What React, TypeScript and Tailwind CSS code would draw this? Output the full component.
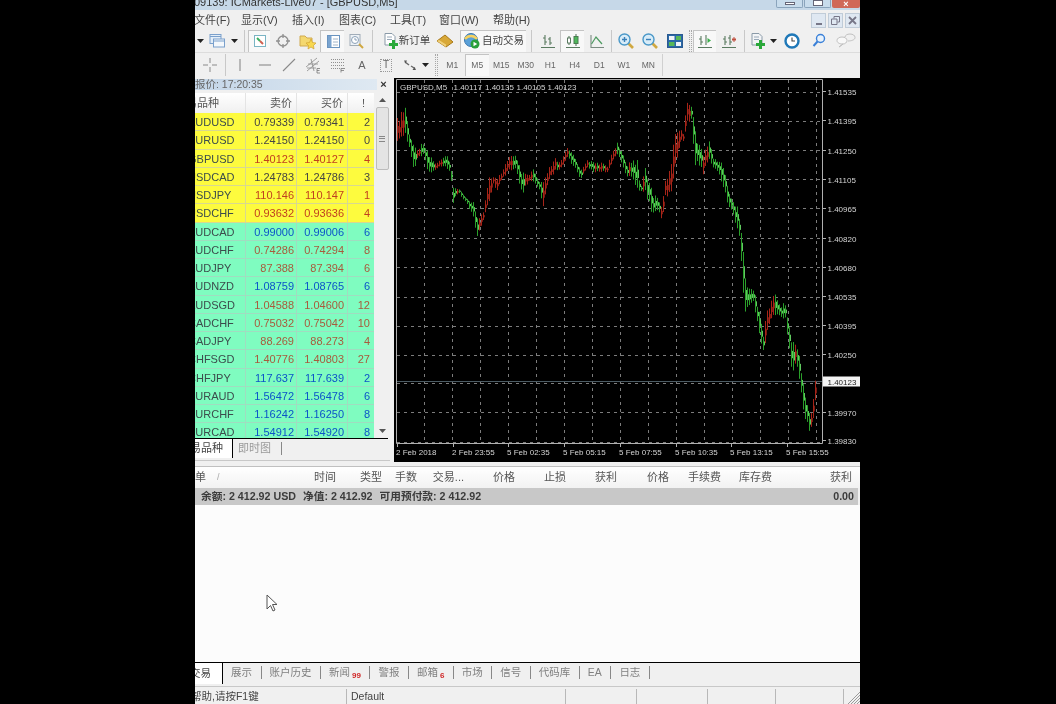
import type { ReactNode } from "react";

const rows = [
  ["AUDUSD", "0.79339", "0.79341", "2", "k", "y"],
  ["EURUSD", "1.24150", "1.24150", "0", "k", "y"],
  ["GBPUSD", "1.40123", "1.40127", "4", "r", "y"],
  ["USDCAD", "1.24783", "1.24786", "3", "k", "y"],
  ["USDJPY", "110.146", "110.147", "1", "r", "y"],
  ["USDCHF", "0.93632", "0.93636", "4", "r", "y"],
  ["AUDCAD", "0.99000", "0.99006", "6", "b", "t"],
  ["AUDCHF", "0.74286", "0.74294", "8", "m", "t"],
  ["AUDJPY", "87.388", "87.394", "6", "m", "t"],
  ["AUDNZD", "1.08759", "1.08765", "6", "b", "t"],
  ["AUDSGD", "1.04588", "1.04600", "12", "m", "t"],
  ["CADCHF", "0.75032", "0.75042", "10", "m", "t"],
  ["CADJPY", "88.269", "88.273", "4", "m", "t"],
  ["CHFSGD", "1.40776", "1.40803", "27", "m", "t"],
  ["CHFJPY", "117.637", "117.639", "2", "b", "t"],
  ["EURAUD", "1.56472", "1.56478", "6", "b", "t"],
  ["EURCHF", "1.16242", "1.16250", "8", "b", "t"],
  ["EURCAD", "1.54912", "1.54920", "8", "b", "t"],
];

// x, top, bottom of the price band, read off the picture
const band = [
  [397, 118, 145], [405, 105, 135], [410, 138, 155], [413, 142, 175], [418, 148, 158], [423, 140, 158],
  [428, 150, 175], [435, 163, 170], [442, 157, 167], [447, 155, 170], [450, 163, 173], [453, 187, 203],
  [458, 187, 193], [465, 197, 202], [473, 200, 218], [477, 215, 238], [483, 212, 220], [488, 175, 208],
  [493, 177, 185], [497, 178, 192], [503, 168, 178], [508, 155, 172], [515, 155, 172], [522, 172, 195],
  [528, 175, 183], [533, 168, 182], [538, 180, 188], [543, 182, 208], [548, 168, 182], [555, 158, 172],
  [560, 162, 170], [567, 147, 158], [575, 155, 172], [580, 170, 180], [587, 158, 170], [593, 162, 173],
  [600, 162, 173], [607, 165, 173], [612, 150, 163], [617, 142, 155], [622, 153, 168], [627, 165, 178],
  [630, 158, 178], [637, 158, 188], [640, 188, 192], [645, 168, 192], [648, 178, 205], [653, 192, 218],
  [658, 197, 212], [662, 205, 227], [665, 178, 198], [670, 168, 197], [673, 135, 182], [680, 125, 143],
  [683, 132, 142], [687, 98, 125], [692, 103, 122], [694, 120, 175], [698, 143, 163], [703, 152, 177],
  [709, 135, 162], [713, 158, 170], [718, 158, 175], [723, 165, 188], [728, 188, 208], [733, 200, 217],
  [738, 208, 233], [741, 225, 262], [743, 240, 300], [745, 272, 323], [748, 288, 308],
  [753, 287, 302], [757, 300, 328], [760, 313, 340], [763, 332, 355], [767, 310, 333], [772, 293, 317],
  [776, 294, 317], [780, 307, 317], [785, 300, 322], [788, 320, 348], [792, 340, 380], [795, 342, 365],
  [798, 347, 377], [802, 377, 405], [805, 390, 425], [810, 417, 433], [813, 390, 427], [815, 378, 403],
];

const noise = (i: number) => {
  const s = Math.sin(i * 12.9898) * 43758.5453;
  return s - Math.floor(s);
};

const bandAt = (x: number) => {
  let k = 0;
  while (k < band.length - 2 && band[k + 1][0] < x) k++;
  const a = band[k];
  const b = band[k + 1];
  const t = Math.min(1, Math.max(0, (x - a[0]) / (b[0] - a[0])));
  return [a[1] + (b[1] - a[1]) * t, a[2] + (b[2] - a[2]) * t];
};

const bars: { x: number; top: number; bot: number; up: boolean }[] = [];
for (let x = 397, i = 0; x <= 815; x += 2, i++) {
  const [t, b] = bandAt(x);
  const h = b - t;
  const before = bandAt(x - 3);
  const after = bandAt(x + 3);
  const slope = after[0] + after[1] - before[0] - before[1];
  bars.push({
    x,
    top: t + h * noise(i) * 0.25,
    bot: b - h * noise(i + 500) * 0.25,
    up: slope + (noise(i + 900) - 0.5) * 14 < 0,
  });
}

const priceLabels = [
  ["1.41535", 91], ["1.41395", 120], ["1.41250", 150], ["1.41105", 179], ["1.40965", 208], ["1.40820", 238],
  ["1.40680", 267], ["1.40535", 296], ["1.40395", 325], ["1.40250", 354], ["1.39970", 412], ["1.39830", 440],
] as const;

const timeLabels = [
  ["2 Feb 2018", 396], ["2 Feb 23:55", 452], ["5 Feb 02:35", 507], ["5 Feb 05:15", 563],
  ["5 Feb 07:55", 619], ["5 Feb 10:35", 675], ["5 Feb 13:15", 730], ["5 Feb 15:55", 786],
] as const;

const gridX = [424, 452, 480, 508, 536, 564, 592, 620, 648, 676, 704, 732, 760, 788, 816];
const gridY = [92, 121, 150, 179, 208, 238, 267, 297, 326, 355, 383, 412, 442];

const Chart = () => (
  <svg viewBox="394 78 466 384" className="block w-[466px] h-[384px] bg-black">
    {gridX.map((x) => (
      <line key={x} x1={x + 0.5} x2={x + 0.5} y1={80} y2={443} stroke="#7c7c7c" strokeWidth={1} strokeDasharray="3 4" />
    ))}
    {gridY.map((y) => (
      <line key={y} x1={397} x2={822} y1={y + 0.5} y2={y + 0.5} stroke="#7c7c7c" strokeWidth={1} strokeDasharray="3 4" />
    ))}
    <line x1={397} x2={822} y1={381.5} y2={381.5} stroke="#4c5c64" />
    <path d="M396.5 79.500H822.500V443.500H396.500Z" fill="none" stroke="#b0b0b0" />
    {timeLabels.map(([, x]) => (
      <line key={x} x1={x + 1.5} x2={x + 1.5} y1={443} y2={447} stroke="#b0b0b0" />
    ))}
    {priceLabels.map(([, y]) => (
      <line key={y} x1={823} x2={826} y1={y + 0.5} y2={y + 0.5} stroke="#b0b0b0" />
    ))}
    {bars.map((b) => (
      <g key={b.x}>
        <line x1={b.x + 0.5} x2={b.x + 0.5} y1={b.top} y2={b.bot} stroke={b.up ? "#a82418" : "#2aa02a"} />
        <line
          x1={b.x + 1.5}
          x2={b.x + 1.5}
          y1={b.top + (b.bot - b.top) * 0.35}
          y2={b.bot - (b.bot - b.top) * 0.35}
          stroke={b.up ? "#7a1a12" : "#60c860"}
        />
      </g>
    ))}
    <g fontSize={8} fill="#d4d4d4">
      <text x={400} y={90}>GBPUSD,M5</text>
      <text x={453.5} y={90}>1.40117</text>
      <text x={485} y={90}>1.40135</text>
      <text x={516.5} y={90}>1.40105</text>
      <text x={547.5} y={90}>1.40123</text>
      {priceLabels.map(([t, y]) => (
        <text key={t} x={827.5} y={y + 3.5}>{t}</text>
      ))}
      {timeLabels.map(([t, x]) => (
        <text key={t} x={x} y={455}>{t}</text>
      ))}
    </g>
    <rect x={823} y={376.5} width={37} height={10} fill="#f4f4f4" />
    <text x={827.5} y={385} fontSize={8} fill="#222">1.40123</text>
  </svg>
);

const Cell = ({ w, on, children }: { w: string; on?: boolean; children?: ReactNode }) => (
  <div
    className={`${w} h-[22px] shrink-0 flex items-center justify-center ${
      on ? "bg-[#f8f8f8] border-t border-l border-[#c4c4c4]" : ""
    }`}
  >
    {children}
  </div>
);

const Sep = ({ w }: { w: string }) => (
  <div className={`${w} h-[22px] shrink-0 flex justify-center`}>
    <div className="w-px h-full bg-[#c8c8c8]" />
  </div>
);

const Grip = ({ w }: { w: string }) => (
  <div className={`${w} h-[22px] shrink-0 flex justify-center`}>
    <div className="w-[3px] h-full border-x border-dotted border-[#a8a8a8]" />
  </div>
);

const Caret = () => (
  <svg width="7" height="4" viewBox="0 0 7 4">
    <path d="M0 0H7L3.500 4Z" fill="#222" />
  </svg>
);

const I = ({ children }: { children: ReactNode }) => (
  <svg width="18" height="18" viewBox="0 0 18 18" fill="none">
    {children}
  </svg>
);

const BarsIcon = () => (
  <I>
    <path d="M2 15.500H16M6 3V13M6 6H4M6 10H8M11 5V13M11 7H9M11 11H13" stroke="#5a7a60" strokeWidth="1.100" />
  </I>
);
const CandleIcon = () => (
  <I>
    <path d="M2 15.500H16M5 4V13M12 2V14" stroke="#5a7a60" strokeWidth="1.100" />
    <rect x="3.500" y="6" width="3" height="5" fill="#fff" stroke="#5a7a60" />
    <rect x="10" y="4.500" width="4" height="7" fill="#4db85a" stroke="#4a7a50" />
  </I>
);
const LineIcon = () => (
  <I>
    <path d="M3 3V15.500H16" stroke="#7a8a80" strokeWidth="1.100" />
    <path d="M3.500 12L8 5L14 12" stroke="#4d9a60" strokeWidth="1.200" />
  </I>
);
const MagIcon = ({ plus }: { plus?: boolean }) => (
  <I>
    <path d="M11 11L16 16" stroke="#d0a840" strokeWidth="2.600" />
    <circle cx="7.500" cy="7.500" r="5.500" fill="#d8ecf8" stroke="#4a98c8" strokeWidth="1.400" />
    <path d={plus ? "M5 7.500H10M7.500 5V10" : "M5 7.500H10"} stroke="#3a80b8" strokeWidth="1.400" />
  </I>
);

const Toolbar1 = () => (
  <div className="h-[24px] flex items-center border-b border-[#dcdcdc]">
    <Cell w="w-[11px]"><Caret /></Cell>
    <Cell w="w-[22px]">
      <I>
        <rect x="2" y="2.500" width="11" height="9" fill="#e4eef8" stroke="#7aa0cc" />
        <rect x="5.500" y="7" width="11" height="8" fill="#f4f8fc" stroke="#7aa0cc" />
        <path d="M5.500 9H16.500M2 4.500H13" stroke="#7aa0cc" />
      </I>
    </Cell>
    <Cell w="w-[12px]"><Caret /></Cell>
    <Sep w="w-[8px]" />
    <Cell w="w-[22px]" on>
      <I>
        <rect x="3.500" y="3.500" width="11" height="11" fill="#fff" stroke="#7ab4c4" />
        <path d="M6 6L9 9" stroke="#3ab060" strokeWidth="2" />
        <path d="M9 9L12 12" stroke="#d06050" strokeWidth="2" />
      </I>
    </Cell>
    <Cell w="w-[25px]">
      <I>
        <circle cx="9" cy="9" r="5" stroke="#909090" strokeWidth="1.300" />
        <path d="M9 2V6M9 12V16M2 9H6M12 9H16" stroke="#909090" strokeWidth="1.300" />
      </I>
    </Cell>
    <Cell w="w-[25px]">
      <I>
        <path d="M1 4H6L8 6H13V14H1Z" fill="#f4d870" stroke="#d0aa50" />
        <path d="M12 7L13.500 10.500L17 11L14.500 13.500L15 17L12 15L9 17L9.500 13.500L7 11L10.500 10.500Z" fill="#f8d850" stroke="#d0a030" strokeWidth="0.700" />
      </I>
    </Cell>
    <Cell w="w-[24px]" on>
      <I>
        <rect x="3.500" y="3.500" width="12" height="12" fill="#fff" stroke="#6a94c0" />
        <rect x="4" y="4" width="3.500" height="11" fill="#7aa4d0" />
        <path d="M9 7H14M9 10H14M9 13H14" stroke="#a0b4c8" />
      </I>
    </Cell>
    <Cell w="w-[24px]">
      <I>
        <rect x="3" y="2.500" width="10" height="11" fill="#eef2f6" stroke="#a0acb8" />
        <circle cx="8" cy="8" r="3.500" fill="#fff" stroke="#8aa0b8" />
        <path d="M8 6V8H10" stroke="#8aa0b8" />
        <path d="M12 12L16 16" stroke="#d0a840" strokeWidth="2" />
      </I>
    </Cell>
    <Sep w="w-[8px]" />
    <Cell w="w-[60px]">
      <div className="flex items-center gap-[1px] text-[10.5px] text-[#444]">
        <I>
          <path d="M3 1.500H10L13 4.500V13H3Z" fill="#fff" stroke="#8a9aa8" />
          <path d="M5 5H10M5 7.500H10" stroke="#98a8b8" />
          <path d="M11.500 8V17M7 12.500H16" stroke="#2aa83a" strokeWidth="3" />
        </I>
        <span className="-ml-[2px]">新订单</span>
      </div>
    </Cell>
    <Cell w="w-[18px]">
      <I>
        <path d="M1 9L9 3L17 10L10 15Z" fill="#d8a838" stroke="#a87818" />
        <path d="M1 9L10 15L10 12.500L3 8Z" fill="#f0d078" />
      </I>
    </Cell>
    <div className="w-[6px] shrink-0" />
    <Cell w="w-[66px]" on>
      <div className="flex items-center gap-[1px] text-[10.5px] text-[#444]">
        <I>
          <circle cx="8" cy="8" r="6.500" fill="#5aa0d8" stroke="#3a78b0" />
          <path d="M2 7C5 3 11 3 14 7" stroke="#f4d060" strokeWidth="2.400" />
          <circle cx="12" cy="12" r="4.500" fill="#2aa03a" />
          <path d="M10.500 9.800V14.200L14.200 12Z" fill="#fff" />
        </I>
        <span>自动交易</span>
      </div>
    </Cell>
    <Sep w="w-[10px]" />
    <Cell w="w-[24px]"><BarsIcon /></Cell>
    <Cell w="w-[24px]" on><CandleIcon /></Cell>
    <Cell w="w-[25px]"><LineIcon /></Cell>
    <Sep w="w-[5px]" />
    <Cell w="w-[23px]"><MagIcon plus /></Cell>
    <Cell w="w-[26px]"><MagIcon /></Cell>
    <Cell w="w-[24px]">
      <I>
        <rect x="1.500" y="2.500" width="15" height="13" fill="#2a68a8" stroke="#2a5a90" />
        <rect x="3" y="4" width="5.500" height="4" fill="#f0f4f8" />
        <rect x="10" y="4" width="5" height="4" fill="#58b858" />
        <rect x="3" y="10" width="5.500" height="4" fill="#58b858" />
        <rect x="10" y="10" width="5" height="4" fill="#f0f4f8" />
      </I>
    </Cell>
    <Grip w="w-[6px]" />
    <Cell w="w-[23px]" on>
      <I>
        <path d="M2 15.500H16M5 4V13M5 7H3M5 10H7M10 3V13" stroke="#5a7a60" strokeWidth="1.100" />
        <path d="M11.500 6V11L15 8.500Z" fill="#3ab04a" />
      </I>
    </Cell>
    <Cell w="w-[26px]">
      <I>
        <path d="M2 15.500H16M5 4V13M5 7H3M5 10H7M10 3V13M10 6H8M10 10H12" stroke="#5a7a60" strokeWidth="1.100" />
        <path d="M14 5V10M12 7.500H16M12.500 6L15.500 9M15.500 6L12.500 9" stroke="#c05040" />
      </I>
    </Cell>
    <Sep w="w-[5px]" />
    <Cell w="w-[22px]">
      <I>
        <path d="M3 1.500H10L13 4.500V13H3Z" fill="#f2f4f6" stroke="#8a9aa8" />
        <path d="M5 5H10M5 7.500H10" stroke="#98a8b8" />
        <path d="M11.500 8V17M7 12.500H16" stroke="#2aa83a" strokeWidth="3" />
      </I>
    </Cell>
    <Cell w="w-[9px]"><Caret /></Cell>
    <Cell w="w-[28px]">
      <I>
        <circle cx="9" cy="9" r="6.500" fill="#fff" stroke="#1f78b8" strokeWidth="2.400" />
        <path d="M9 5.500V9H12" stroke="#444" strokeWidth="1.100" />
      </I>
    </Cell>
    <Cell w="w-[26px]">
      <I>
        <circle cx="10.500" cy="6.500" r="4" fill="#e8f2fc" stroke="#3a80d8" strokeWidth="1.400" />
        <path d="M7.500 9.500L3.500 14" stroke="#3a80d8" strokeWidth="2" />
      </I>
    </Cell>
    <Cell w="w-[28px]">
      <svg width="22" height="18" viewBox="0 0 22 18" fill="none">
        <path d="M8 12C4 12 2 10.500 2 8.500C2 6.500 4 5 7 5C10 5 12 6.500 12 8.500C12 10.500 10 12 8 12L4 15Z" fill="#f8f8f8" stroke="#c0c0c0" />
        <path d="M13 9C16 9 20 8 20 5.500C20 3.500 18 2 15 2C12 2 10 3.500 10 5" stroke="#c0c0c0" />
      </svg>
    </Cell>
  </div>
);

const tf = ["M1", "M5", "M15", "M30", "H1", "H4", "D1", "W1", "MN"];

const Toolbar2 = () => (
  <div className="h-[24px] flex items-center">
    <div className="w-[3px] shrink-0" />
    <Cell w="w-[24px]">
      <I><path d="M9 2V7M9 11V16M2 9H7M11 9H16" stroke="#8a8a8a" strokeWidth="1" /></I>
    </Cell>
    <Sep w="w-[6px]" />
    <Cell w="w-[24px]"><I><path d="M9 3V15" stroke="#8a8a8a" strokeWidth="1.100" /></I></Cell>
    <Cell w="w-[25px]"><I><path d="M3 9H15" stroke="#8a8a8a" strokeWidth="1.100" /></I></Cell>
    <Cell w="w-[24px]"><I><path d="M3 15L15 3" stroke="#8a8a8a" strokeWidth="1.100" /></I></Cell>
    <Cell w="w-[24px]">
      <I>
        <path d="M2 11L13 2M3 15L15 5M7 3L10 15M4 8H14M3 12H12" stroke="#8a8a8a" strokeWidth="0.800" />
        <path d="M13 17V12.500H16M13 14.500H15.500M13 17H16" stroke="#777" strokeWidth="0.800" />
      </I>
    </Cell>
    <Cell w="w-[25px]">
      <I>
        <path d="M2 3.500H15M2 6.500H15M2 9.500H15M2 12.500H11" stroke="#909090" strokeDasharray="1 1" />
        <path d="M12 16.500V12.500H16M12 14.500H15" stroke="#777" strokeWidth="0.800" />
      </I>
    </Cell>
    <Cell w="w-[24px]"><span className="text-[11px] text-[#666]">A</span></Cell>
    <Cell w="w-[24px]">
      <div className="w-[12px] h-[13px] border border-dotted border-[#999] flex items-center justify-center text-[10px] leading-none text-[#666]">T</div>
    </Cell>
    <Cell w="w-[24px]">
      <I>
        <path d="M4 6L8 9" stroke="#666" strokeWidth="1.400" />
        <path d="M3 4.500L6 4.500L4.500 7.500Z" fill="#555" />
        <path d="M10 10L14 12.500" stroke="#666" strokeWidth="1.400" />
        <path d="M15 14L11.500 14L13.500 11Z" fill="#555" />
      </I>
    </Cell>
    <Cell w="w-[7px]"><Caret /></Cell>
    <div className="w-[4px] shrink-0" />
    <Grip w="w-[7px]" />
    {tf.map((t) => (
      <div
        key={t}
        className={`w-[24.5px] h-[22px] shrink-0 flex items-center justify-center text-[8.5px] text-[#666] ${
          t === "M5" ? "bg-[#f8f8f8] border-t border-l border-[#c4c4c4]" : ""
        }`}
      >
        {t}
      </div>
    ))}
    <div className="w-px h-[22px] ml-[1px] bg-[#d0d0d0]" />
  </div>
);

const textTone: Record<string, string> = {
  k: "text-[#444444]",
  r: "text-[#c04020]",
  m: "text-[#a85a3c]",
  b: "text-[#0c54c8]",
};

const MarketWatch = () => (
  <div className="w-[195px] shrink-0 h-full flex flex-col overflow-hidden">
    <div className="h-[16px] shrink-0 flex items-start pt-[2px]">
      <div className="w-[182px] h-[11px] flex items-center bg-gradient-to-r from-[#c4d6e8] to-[#dfe9f2] text-[10.5px] text-[#666]">
        <span className="-ml-[21px] whitespace-nowrap">行情报价: 17:20:35</span>
      </div>
      <span className="w-[13px] text-center text-[11px] leading-[11px] font-bold text-[#333]">×</span>
    </div>
    <div className="h-[345px] shrink-0 flex">
      <div className="w-[179px] shrink-0 flex flex-col overflow-hidden">
        <div className="h-[20px] shrink-0 grid grid-cols-[51px_51px_51px_26px] bg-gradient-to-b from-white to-[#f0f0f0] text-[11px] text-[#555] leading-[20px]">
          <div className="whitespace-nowrap border-r border-[#e4e4e4] overflow-hidden"><span className="-ml-[20px] inline-block">交易品种</span></div>
          <div className="text-right pr-[4px] border-r border-[#e4e4e4]">卖价</div>
          <div className="text-right pr-[4px] border-r border-[#e4e4e4]">买价</div>
          <div className="text-right pr-[9px]">!</div>
        </div>
        {rows.map(([sym, bid, ask, sp, tone, bg]) => (
          <div
            key={sym}
            className={`h-[18.25px] shrink-0 grid grid-cols-[51px_51px_51px_26px] text-[11px] leading-[18px] border-b ${
              bg === "y" ? "bg-[#fdfb3e] border-[#d8d890]" : "bg-[#7ffcc0] border-[#a0dcc0]"
            }`}
          >
            <div className={`whitespace-nowrap overflow-hidden border-r text-[#3c4c4c] ${bg === "y" ? "border-[#d8d890]" : "border-[#a0dcc0]"}`}>
              <span className="-ml-[7px] inline-block">{sym}</span>
            </div>
            <div className={`text-right pr-[2px] border-r ${textTone[tone]} ${bg === "y" ? "border-[#d8d890]" : "border-[#a0dcc0]"}`}>{bid}</div>
            <div className={`text-right pr-[3px] border-r ${textTone[tone]} ${bg === "y" ? "border-[#d8d890]" : "border-[#a0dcc0]"}`}>{ask}</div>
            <div className={`text-right pr-[4px] ${textTone[tone]}`}>{sp}</div>
          </div>
        ))}
      </div>
      <div className="w-[14px] shrink-0 ml-[1px] flex flex-col items-center bg-[#f0f0f0]">
        <div className="h-[14px] flex items-center">
          <svg width="7" height="4" viewBox="0 0 7 4"><path d="M0 4H7L3.500 0Z" fill="#555" /></svg>
        </div>
        <div className="w-[13px] h-[63px] bg-[#e4e4e4] border border-[#bcbcbc] rounded-[2px] flex items-center justify-center">
          <div className="w-[6px] h-[6px] border-y border-[#888] flex items-center"><div className="w-full h-px bg-[#888]" /></div>
        </div>
        <div className="flex-1" />
        <div className="h-[14px] flex items-center">
          <svg width="7" height="4" viewBox="0 0 7 4"><path d="M0 0H7L3.500 4Z" fill="#555" /></svg>
        </div>
      </div>
    </div>
    <div className="h-[20px] shrink-0 w-[193px] border-t border-black flex text-[11px] leading-[18px]">
      <div className="w-[38px] h-full bg-white border-r border-black overflow-hidden whitespace-nowrap text-[#444]">
        <span className="-ml-[16px] inline-block">交易品种</span>
      </div>
      <div className="w-[49px] text-right pr-[10px] border-r border-[#888] my-[3px] leading-[12px] text-[#999]">即时图</div>
    </div>
    <div className="flex-1 border-t border-[#c8c8c8] mt-[2px]" />
  </div>
);

const termCols = [
  ["时间", "w-[119px]"], ["类型", "w-[46px]"], ["手数", "w-[35px]"], ["交易...", "w-[47px]"], ["价格", "w-[51px]"],
  ["止损", "w-[51px]"], ["获利", "w-[51px]"], ["价格", "w-[52px]"], ["手续费", "w-[52px]"], ["库存费", "w-[51px]"], ["获利", "w-[80px]"],
];

const bottomTabs: [string, string?][] = [
  ["展示"], ["账户历史"], ["新闻", "99"], ["警报"], ["邮箱", "6"], ["市场"], ["信号"], ["代码库"], ["EA"], ["日志"],
];

const Terminal = () => (
  <div className="h-[224px] shrink-0 flex flex-col">
    <div className="h-[5px] shrink-0 bg-[#f0f0f0] border-b border-[#c0c0c0]" />
    <div className="h-[21px] shrink-0 flex items-center bg-gradient-to-b from-white to-[#f2f2f2] text-[11px] text-[#555] whitespace-nowrap">
      <span className="w-[22px] shrink-0 overflow-hidden"><span className="-ml-[11px] inline-block">订单</span></span>
      <span className="w-[0px] text-[#aaa] text-[9px]">/</span>
      {termCols.map(([t, w], i) => (
        <span key={i} className={`${w} shrink-0 text-right`}>{t}</span>
      ))}
    </div>
    <div className="h-[17px] shrink-0 w-[663px] bg-[#c8c8c8] flex items-center justify-between pl-[6px] pr-[4px] text-[10.7px] font-bold text-[#3c3c3c] whitespace-nowrap">
      <div className="flex gap-[7px]">
        <span>余额: 2 412.92 USD</span>
        <span>净值: 2 412.92</span>
        <span>可用预付款: 2 412.92</span>
      </div>
      <span>0.00</span>
    </div>
    <div className="flex-1 relative bg-[#fcfcfc]">
      <svg width="12" height="18" viewBox="0 0 12 18" className="absolute left-[71px] top-[89px]">
        <path d="M1 1V15L4.500 11.500L7 17L9 16L6.500 10.500H11Z" fill="#fff" stroke="#555" />
      </svg>
    </div>
    <div className="h-[24px] shrink-0 flex bg-[#f0f0f0] border-t border-black text-[10.5px] leading-[20px] whitespace-nowrap">
      <div className="w-[28px] h-[21px] shrink-0 bg-white border-r border-black overflow-hidden text-[#444]">
        <span className="-ml-[5px] inline-block">交易</span>
      </div>
      <div className="flex pl-[8px] items-start">
        {bottomTabs.map(([t, badge]) => (
          <div key={t} className="flex items-center h-[13px] mt-[3px] pr-[8.5px] mr-[8px] border-r border-[#888] leading-[13px] text-[#808080]">
            <span>{t}</span>
            {badge && <span className="text-[8px] font-bold text-[#d02828] ml-[2px] mt-[6px] leading-none">{badge}</span>}
          </div>
        ))}
      </div>
    </div>
  </div>
);

const StatusBar = () => (
  <div className="h-[18px] shrink-0 flex border-t border-[#c8c8c8] text-[10.5px] text-[#444] whitespace-nowrap">
    <div className="w-[152px] shrink-0 border-r border-[#b8b8b8] overflow-hidden mt-[2px]">
      <span className="-ml-[4px] inline-block leading-[15px]">帮助,请按F1键</span>
    </div>
    <div className="w-[219px] shrink-0 border-r border-[#b8b8b8] pl-[4px] mt-[2px] leading-[15px]">Default</div>
    <div className="w-[71px] shrink-0 border-r border-[#b8b8b8] mt-[2px]" />
    <div className="w-[71px] shrink-0 border-r border-[#b8b8b8] mt-[2px]" />
    <div className="w-[68px] shrink-0 border-r border-[#b8b8b8] mt-[2px]" />
    <div className="w-[68px] shrink-0 border-r border-[#b8b8b8] mt-[2px]" />
    <div className="flex-1 flex items-end justify-end">
      <svg width="12" height="14" viewBox="0 0 12 14">
        <path d="M12 2L0 14M12 5L3 14M12 8L6 14M12 11L9 14" stroke="#9a9a9a" />
      </svg>
    </div>
  </div>
);

export default function App() {
  return (
    <div className="w-[1056px] h-[704px] bg-black overflow-hidden">
      <div className="ml-[195px] w-[665px] h-[704px] flex flex-col overflow-hidden bg-[#f0f0f0] blur-[0.4px] font-['Liberation_Sans','Noto_Sans_CJK_SC',sans-serif]">
        <div className="h-[10px] shrink-0 flex justify-between bg-[#c6d8e8] overflow-hidden">
          <span className="-mt-[6px] -ml-[1px] text-[11px] leading-[16px] text-[#333] whitespace-nowrap">09139: ICMarkets-Live07 - [GBPUSD,M5]</span>
          <div className="flex gap-[1px] h-[8px]">
            <div className="w-[27px] rounded-b-[2px] border border-t-0 border-[#8aa4bc] bg-[#c8dcec] flex justify-center"><div className="w-[10px] h-[3px] mt-[2px] bg-white border border-[#667]" /></div>
            <div className="w-[27px] rounded-b-[2px] border border-t-0 border-[#8aa4bc] bg-[#c8dcec] flex justify-center"><div className="w-[10px] h-[6px] bg-white border border-[#667]" /></div>
            <div className="w-[28px] rounded-b-[2px] bg-[#d06858] flex justify-center items-center text-[9px] leading-none font-bold text-white">×</div>
          </div>
        </div>
        <div className="h-[19px] shrink-0 flex items-center pt-[1px] text-[11px] text-[#444] whitespace-nowrap">
          <span className="w-[46px]"><span className="-ml-[1px]">文件(F)</span></span>
          <span className="w-[51px]">显示(V)</span>
          <span className="w-[47px]">插入(I)</span>
          <span className="w-[51px]">图表(C)</span>
          <span className="w-[49px]">工具(T)</span>
          <span className="w-[54px]">窗口(W)</span>
          <span className="w-[318px]">帮助(H)</span>
          <div className="flex gap-[2px] text-[#666]">
            <div className="w-[15px] h-[15px] bg-[#dfe8f2] border border-[#c0ccd8] flex items-end justify-center pb-[2px]"><div className="w-[6px] h-[2px] bg-[#778]" /></div>
            <div className="w-[15px] h-[15px] bg-[#dfe8f2] border border-[#c0ccd8] flex items-center justify-center">
              <svg width="9" height="9" viewBox="0 0 9 9" fill="none"><path d="M3 2.500V.5H8.500V6H6.500M.5 3H6V8.500H.5Z" stroke="#778" /></svg>
            </div>
            <div className="w-[15px] h-[15px] bg-[#dfe8f2] border border-[#c0ccd8] flex items-center justify-center">
              <svg width="9" height="9" viewBox="0 0 9 9" fill="none"><path d="M1 1L8 8M8 1L1 8" stroke="#778" strokeWidth="1.800" /></svg>
            </div>
          </div>
        </div>
        <Toolbar1 />
        <Toolbar2 />
        <div className="h-[385px] shrink-0 flex">
          <MarketWatch />
          <div className="w-[4px] shrink-0" />
          <div className="pt-[1px]"><Chart /></div>
        </div>
        <Terminal />
        <StatusBar />
      </div>
    </div>
  );
}
